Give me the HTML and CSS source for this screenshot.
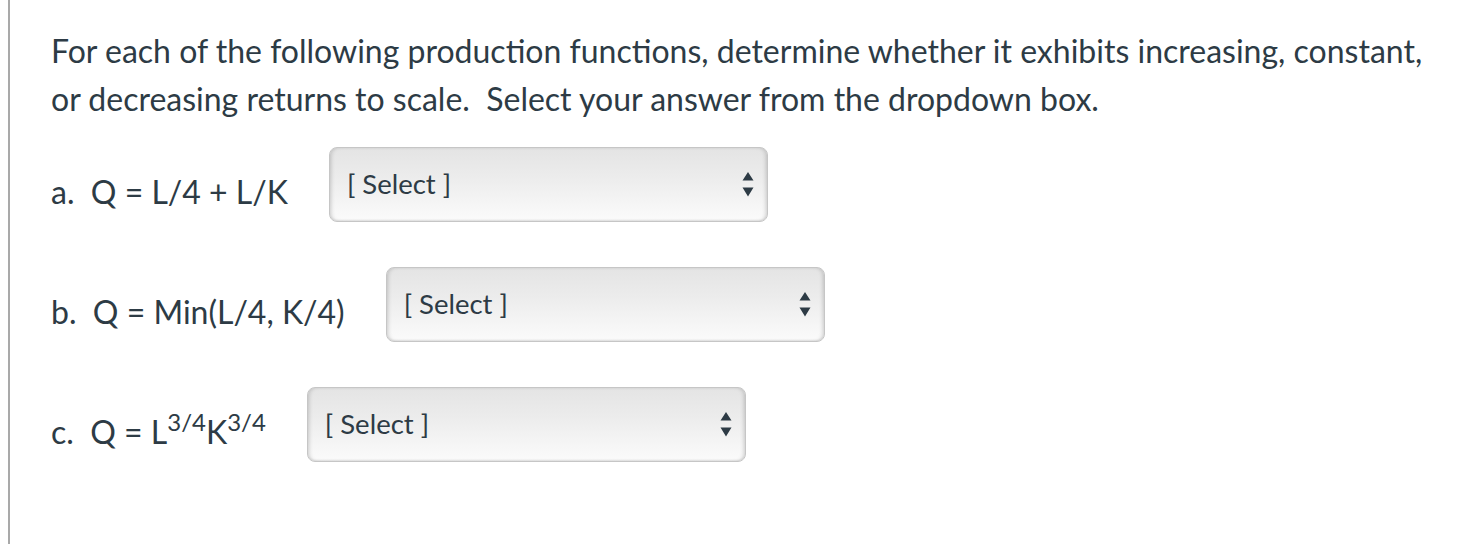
FILE: index.html
```html
<!DOCTYPE html>
<html>
<head>
<meta charset="utf-8">
<link rel="stylesheet" href="styles.css">
</head>
<body>
<div class="page">
  <p class="intro">For each of the following production functions, determine whether it exhibits increasing, constant, or decreasing returns to scale.&nbsp; Select your answer from the dropdown box.</p>
  <div class="row">
    <span class="label">a.&nbsp; Q = L/4 + L/K</span>
    <div class="select"><span>[ Select ]</span><svg class="arrows" width="12" height="26" viewBox="0 0 12 26"><path d="M6 0 L11.5 8.5 L0.5 8.5 Z M0.5 15.5 L11.5 15.5 L6 24.5 Z" fill="#2d3b45"/></svg></div>
  </div>
  <div class="row">
    <span class="label">b.&nbsp; Q = Min(L/4, K/4)</span>
    <div class="select"><span>[ Select ]</span><svg class="arrows" width="12" height="26" viewBox="0 0 12 26"><path d="M6 0 L11.5 8.5 L0.5 8.5 Z M0.5 15.5 L11.5 15.5 L6 24.5 Z" fill="#2d3b45"/></svg></div>
  </div>
  <div class="row">
    <span class="label">c.&nbsp; Q = L<sup>3/4</sup>K<sup>3/4</sup></span>
    <div class="select"><span>[ Select ]</span><svg class="arrows" width="12" height="26" viewBox="0 0 12 26"><path d="M6 0 L11.5 8.5 L0.5 8.5 Z M0.5 15.5 L11.5 15.5 L6 24.5 Z" fill="#2d3b45"/></svg></div>
  </div>
</div>
</body>
</html>
```

FILE: styles.css
```css
html, body {
  margin: 0;
  padding: 0;
  background: #ffffff;
}
body {
  font-family: Lato, "Open Sans", "Liberation Sans", sans-serif;
  color: #2d3b45;
  font-size: 32px;
  line-height: 48px;
}
.page {
  margin-left: 8px;
  border-left: 2px solid #a9a9a9;
  min-height: 544px;
  padding: 27px 30px 0 41px;
  box-sizing: border-box;
}
.intro {
  margin: 0 0 24px 0;
}
.row {
  display: flex;
  align-items: flex-start;
  gap: 41px;
  margin-bottom: 45px;
}
.label {
  margin-top: 21px;
  white-space: nowrap;
}
sup {
  font-size: 24px;
  line-height: 0;
  vertical-align: 13px;
}
.select {
  width: 439px;
  height: 75px;
  box-sizing: border-box;
  border: 1px solid #c6c6c6;
  border-radius: 8px;
  background: linear-gradient(to bottom, #e4e4e4 0%, #ececec 40%, #fbfbfb 100%);
  box-shadow: inset 3px 0 4px -2px rgba(0,0,0,0.18), inset -3px 0 4px -2px rgba(0,0,0,0.18), inset 0 -2px 2px -1px rgba(0,0,0,0.08);
  display: flex;
  align-items: center;
  justify-content: space-between;
  padding: 0 13px 0 17px;
  font-size: 27.5px;
  line-height: 1;
  color: #2d3b45;
}
.select span {
  margin-top: -2px;
}
.arrows {
  display: block;
}
```
